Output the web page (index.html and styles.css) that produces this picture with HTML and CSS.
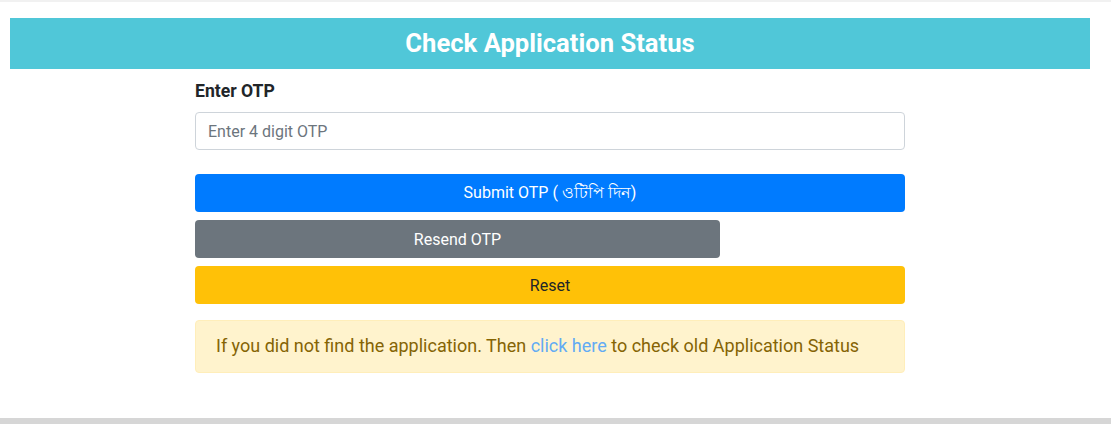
FILE: index.html
```html
<!DOCTYPE html>
<html lang="en">
<head>
  <meta charset="UTF-8">
  <title>Check Application Status</title>
  <link rel="stylesheet" href="styles.css">
</head>
<body>

<div class="top-strip"></div>

<div class="page">
  <h1 class="title-bar">Check Application Status</h1>

  <form class="otp-form">
    <label class="form-label" for="otp">Enter OTP</label>
    <input class="form-input" id="otp" type="text" placeholder="Enter 4 digit OTP">

    <button type="button" class="btn btn-primary">Submit OTP ( ওটিপি দিন)</button>
    <button type="button" class="btn btn-secondary btn-resend">Resend OTP</button>
    <button type="reset" class="btn btn-warning">Reset</button>

    <div class="alert">
      If you did not find the application. Then <a href="#">click here</a> to check old Application Status
    </div>
  </form>
</div>

<div class="bottom-strip"></div>

</body>
</html>
```

FILE: styles.css
```css
body { margin: 0; font-family: Roboto, "Noto Sans", "Noto Sans Bengali", sans-serif; color: #212529; background: #fff; }
.top-strip { height: 2px; background: #f1f1f1; }
.page { padding: 16px 21px 0 10px; height: 400px; box-sizing: border-box; }
.title-bar { margin: 0; height: 51px; line-height: 51px; background: #50c7d8; color: #fff; text-align: center; font-size: 25.6px; font-weight: 700; }
.otp-form { width: 710px; margin: 0 auto; }
.form-label { display: block; font-weight: 700; font-size: 17.6px; margin-top: 12px; line-height: 21px; }
.form-input { display: block; box-sizing: border-box; width: 100%; height: 38px; margin-top: 10px; padding: 6px 12px; font: 16px Roboto, sans-serif; border: 1px solid #ced4da; border-radius: 4px; color: #495057; }
.form-input::placeholder { color: #6c757d; }
.btn { display: block; box-sizing: border-box; width: 100%; height: 38px; border: none; border-radius: 4px; font: 16px Roboto, "Noto Sans", sans-serif; color: #fff; }
.btn-primary { background: #007bff; margin-top: 24px; }
.btn-secondary { background: #6c757d; margin-top: 8px; }
.btn-resend { width: 525px; }
.btn-warning { background: #ffc107; color: #212529; margin-top: 8px; }
.alert { margin-top: 16px; padding: 14px 20px 16px; background: #fff3cd; border: 1px solid #ffeeba; border-radius: 4px; color: #856404; font-size: 18px; line-height: 21px; }
.alert a { color: #62abf4; text-decoration: none; }
.bottom-strip { height: 6px; background: #d6d6d6; margin-top: 16px; }
```
